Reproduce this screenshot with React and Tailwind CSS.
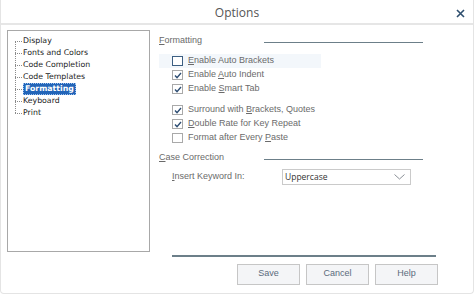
import React from 'react';

const treeItems = ['Display', 'Fonts and Colors', 'Code Completion', 'Code Templates', 'Formatting', 'Keyboard', 'Print'];

const Mn = ({ children }) => <span className="underline underline-offset-1">{children}</span>;

const CheckBox = ({ checked, focused }) => (
  <span
    className={
      'flex h-[10px] w-[11px] shrink-0 items-center justify-center bg-white ' +
      (focused ? 'border-[1.5px] border-[#3d5f82]' : 'border border-[#a9a9a9]')
    }
  >
    {checked && (
      <svg width="8" height="7" viewBox="0 0 8 7">
        <path d="M1 3.6 L3 5.6 L7 1" fill="none" stroke="#2f4f74" strokeWidth="1.4" />
      </svg>
    )}
  </span>
);

const Row = ({ checked, focused, hover, className = '', children }) => (
  <div className={'flex h-[14px] items-center ' + className}>
    <div className={'flex h-full w-[162px] items-center gap-[5px] pl-[13px] ' + (hover ? 'bg-[#f3f7fb]' : '')}>
      <CheckBox checked={checked} focused={focused} />
      <span className="whitespace-nowrap">{children}</span>
    </div>
  </div>
);

const GroupHeading = ({ className = '', children }) => (
  <div className={'flex h-[14px] w-[264px] items-center justify-between ' + className}>
    <span className="text-[#6a6a6a]">{children}</span>
    <div className="mt-[3px] h-[1.5px] w-[159px] bg-[#6c7f89]" />
  </div>
);

const Button = ({ children }) => (
  <button className="h-[21px] w-[63px] border border-[#c6c6c6] bg-[#f4f5f7] text-[9px] text-[#5b6b7c]">
    {children}
  </button>
);

export default function App() {
  return (
    <div className="h-[294px] w-[474px] overflow-hidden rounded-b-sm border-x border-b border-[#e4e4e4] bg-white">
      <div className="relative flex h-[25px] items-center justify-center border-b-2 border-[#e6e6e6] pt-[3px]">
        <span className="text-[12px] text-[#555555]" style={{ fontFamily: '"Open Sans", sans-serif' }}>
          Options
        </span>
        <svg className="absolute right-[8px] top-[9px]" width="9" height="9" viewBox="0 0 9 9">
          <path d="M1 1 L8 8 M8 1 L1 8" stroke="#2e4e6e" strokeWidth="1.6" />
        </svg>
      </div>

      <div className="flex items-start gap-[9px] pl-[6px] pt-[5px]">
        <div
          className="h-[222px] w-[143px] shrink-0 border border-[#a8a8a8] bg-white pt-[4px]"
          style={{ fontFamily: '"DejaVu Sans", sans-serif' }}
        >
          <div className="relative ml-[7px]">
            <div className="absolute left-0 top-[6px] h-[72px] w-0 border-l border-dotted border-[#8a8a8a]" />
            {treeItems.map((item) => (
              <div key={item} className="flex h-[12px] items-center">
                <span className="h-0 w-[7px] border-t border-dotted border-[#8a8a8a]" />
                {item === 'Formatting' ? (
                  <span className="ml-[1px] border border-dotted border-[#9fc3ef] bg-[#2365b8] px-[1px] text-[7.8px] font-bold leading-[10px] text-white">
                    {item}
                  </span>
                ) : (
                  <span className="ml-[1px] text-[7.8px] leading-[10px] text-[#222222]">{item}</span>
                )}
              </div>
            ))}
          </div>
        </div>

        <div
          className="flex flex-col pt-[4px] text-[9px] text-[#6b6b6b]"
          style={{ fontFamily: '"Liberation Sans", Arial, sans-serif' }}
        >
          <GroupHeading>
            <Mn>F</Mn>ormatting
          </GroupHeading>
          <Row focused hover className="mt-[6px]">
            <Mn>E</Mn>nable Auto Brackets
          </Row>
          <Row checked>
            Enable <Mn>A</Mn>uto Indent
          </Row>
          <Row checked>
            Enable <Mn>S</Mn>mart Tab
          </Row>
          <Row checked className="mt-[7px]">
            Surround with <Mn>B</Mn>rackets, Quotes
          </Row>
          <Row checked>
            <Mn>D</Mn>ouble Rate for Key Repeat
          </Row>
          <Row>
            Format after Every <Mn>P</Mn>aste
          </Row>
          <GroupHeading className="mt-[6px]">
            <span>
              <Mn>C</Mn>ase Correction
            </span>
          </GroupHeading>
          <div className="mt-[4px] flex h-[16px] items-center pl-[13px]">
            <span className="w-[110px]">
              <Mn>I</Mn>nsert Keyword In:
            </span>
            <div className="flex h-[16px] w-[129px] items-center justify-between border border-[#cacaca] bg-white pl-[2px] pr-[5px]">
              <span className="text-[8.5px] font-medium text-[#333333]" style={{ fontFamily: '"Open Sans", sans-serif' }}>
                Uppercase
              </span>
              <svg width="11" height="6" viewBox="0 0 11 6">
                <path d="M0.5 0.5 L5.5 5 L10.5 0.5" fill="none" stroke="#8a8f96" strokeWidth="1" />
              </svg>
            </div>
          </div>

          <div className="ml-[13px] mt-[70px] h-[1.5px] w-[264px] bg-[#6c7f89]" />
          <div className="mt-[7px] flex w-[279px] justify-end gap-[6px]">
            <Button>Save</Button>
            <Button>Cancel</Button>
            <Button>Help</Button>
          </div>
        </div>
      </div>
    </div>
  );
}
